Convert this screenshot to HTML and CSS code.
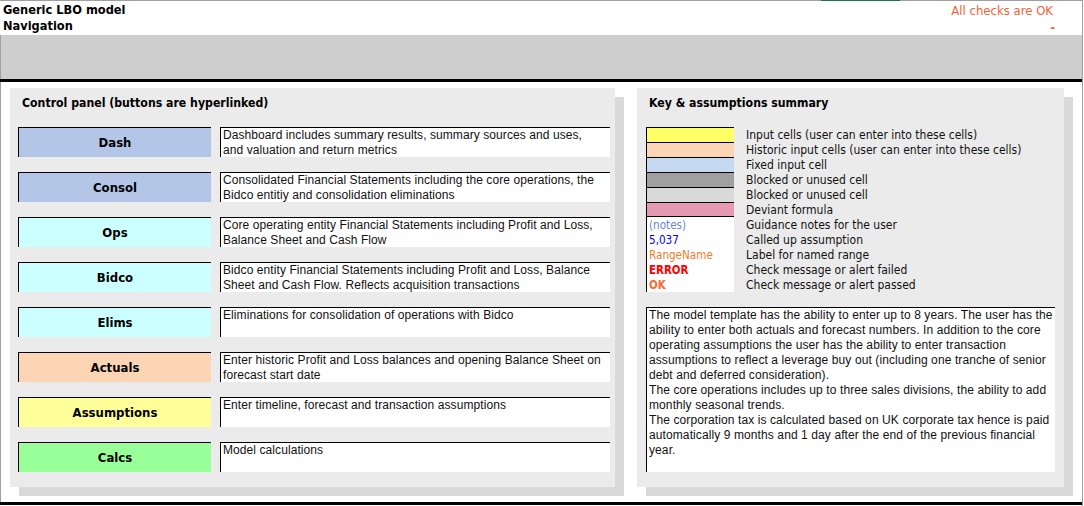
FILE: index.html
```html
<!DOCTYPE html>
<html lang="en">
<head>
    <meta charset="UTF-8">
    <title>Generic LBO model - Navigation</title>
    <link rel="stylesheet" href="styles.css">
</head>
<body>
    <div class="page">
        <div class="header">
            <div class="titles">
                <div class="title">Generic LBO model</div>
                <div class="title">Navigation</div>
            </div>
            <div class="checks">
                <div>All checks are OK</div>
                <div class="dash">-</div>
            </div>
        </div>

        <div class="band"></div>
        <div class="rule"></div>

        <div class="main">
            <div class="panel panel-left">
                <h2>Control panel (buttons are hyperlinked)</h2>

                <div class="rows">
                    <div class="row">
                        <a class="btn btn-blue" href="#dash">Dash</a>
                        <div class="desc">Dashboard includes summary results, summary sources and uses,<br>and valuation and return metrics</div>
                    </div>
                    <div class="row">
                        <a class="btn btn-blue" href="#consol">Consol</a>
                        <div class="desc">Consolidated Financial Statements including the core operations, the<br>Bidco entitiy and consolidation eliminations</div>
                    </div>
                    <div class="row">
                        <a class="btn btn-cyan" href="#ops">Ops</a>
                        <div class="desc">Core operating entity Financial Statements including Profit and Loss,<br>Balance Sheet and Cash Flow</div>
                    </div>
                    <div class="row">
                        <a class="btn btn-cyan" href="#bidco">Bidco</a>
                        <div class="desc">Bidco entity Financial Statements including Profit and Loss, Balance<br>Sheet and Cash Flow. Reflects acquisition transactions</div>
                    </div>
                    <div class="row">
                        <a class="btn btn-cyan" href="#elims">Elims</a>
                        <div class="desc">Eliminations for consolidation of operations with Bidco</div>
                    </div>
                    <div class="row">
                        <a class="btn btn-peach" href="#actuals">Actuals</a>
                        <div class="desc">Enter historic Profit and Loss balances and opening Balance Sheet on<br>forecast start date</div>
                    </div>
                    <div class="row">
                        <a class="btn btn-yellow" href="#assumptions">Assumptions</a>
                        <div class="desc">Enter timeline, forecast and transaction assumptions</div>
                    </div>
                    <div class="row">
                        <a class="btn btn-green" href="#calcs">Calcs</a>
                        <div class="desc">Model calculations</div>
                    </div>
                </div>
            </div>

            <div class="panel panel-right">
                <h2>Key &amp; assumptions summary</h2>

                <div class="legend">
                    <div class="key"><span class="swatch sw-input"></span><span class="label">Input cells (user can enter into these cells)</span></div>
                    <div class="key"><span class="swatch sw-historic"></span><span class="label">Historic input cells (user can enter into these cells)</span></div>
                    <div class="key"><span class="swatch sw-fixed"></span><span class="label">Fixed input cell</span></div>
                    <div class="key"><span class="swatch sw-blocked"></span><span class="label">Blocked or unused cell</span></div>
                    <div class="key"><span class="swatch sw-unused"></span><span class="label">Blocked or unused cell</span></div>
                    <div class="key"><span class="swatch sw-deviant"></span><span class="label">Deviant formula</span></div>
                    <div class="key"><span class="swatch sw-text notes">(notes)</span><span class="label">Guidance notes for the user</span></div>
                    <div class="key"><span class="swatch sw-text called">5,037</span><span class="label">Called up assumption</span></div>
                    <div class="key"><span class="swatch sw-text range">RangeName</span><span class="label">Label for named range</span></div>
                    <div class="key"><span class="swatch sw-text error">ERROR</span><span class="label">Check message or alert failed</span></div>
                    <div class="key"><span class="swatch sw-text ok">OK</span><span class="label">Check message or alert passed</span></div>
                </div>

                <div class="summary">The model template has the ability to enter up to 8 years. The user has the<br>ability to enter both actuals and forecast numbers. In addition to the core<br>operating assumptions the user has the ability to enter transaction<br>assumptions to reflect a leverage buy out (including one tranche of senior<br>debt and deferred consideration).<br>The core operations includes up to three sales divisions, the ability to add<br>monthly seasonal trends.<br>The corporation tax is calculated based on UK corporate tax hence is paid<br>automatically 9 months and 1 day after the end of the previous financial<br>year.</div>
            </div>
        </div>

        <div class="rule"></div>
    </div>
</body>
</html>
```

FILE: styles.css
```css
* {
    margin: 0;
    padding: 0;
    box-sizing: border-box;
}

body {
    font-family: 'Liberation Sans', Arial, sans-serif;
    font-size: 12px;
    color: #111;
    background-color: #fff;
    width: 1084px;
    height: 506px;
    overflow: hidden;
}

.page {
    position: relative;
    width: 1083px;
    height: 506px;
    border-top: 1px solid #a0a0a0;
    border-right: 1px solid #a0a0a0;
}

/* green tab marker on the top edge */
.page::before {
    content: '';
    position: absolute;
    top: -1px;
    left: 821px;
    width: 79px;
    height: 1px;
    background-color: #217346;
}

.header {
    display: flex;
    justify-content: space-between;
    height: 34px;
    padding: 1px 29px 0 3px;
    font-family: 'DejaVu Sans Condensed', 'DejaVu Sans', sans-serif;
}

.title {
    font-weight: bold;
    font-size: 12.7px;
    line-height: 16px;
    color: #000;
}

.checks {
    text-align: right;
    color: #f0643c;
    font-size: 13px;
    line-height: 16px;
    padding-top: 1px;
}

.checks .dash {
    margin-right: -2px;
    line-height: 18px;
    font-weight: bold;
}

.band {
    height: 44px;
    background-color: #cecece;
    border-left: 1px solid #a0a0a0;
}

.rule {
    height: 3px;
    background-color: #000;
}

.main {
    display: flex;
    gap: 22px;
    height: 420px;
    padding: 6px 0 0 9px;
    border-left: 1px solid #a0a0a0;
}

.panel {
    height: 399px;
    background-color: #ebebeb;
    box-shadow: 9px 9px 0 #d9d9d9;
}

.panel h2 {
    font-family: 'DejaVu Sans Condensed', 'DejaVu Sans', sans-serif;
    font-size: 12.2px;
    font-weight: bold;
    line-height: 15px;
    color: #000;
    padding: 8px 0 0 12px;
    margin-bottom: 16px;
}

.panel-left {
    width: 605px;
}

.panel-right {
    width: 427px;
}

.rows {
    display: flex;
    flex-direction: column;
    gap: 15px;
    padding-left: 8px;
}

.row {
    display: flex;
    gap: 9px;
    height: 30px;
}

.btn {
    display: flex;
    align-items: center;
    justify-content: center;
    width: 193px;
    border-top: 1px solid #000;
    border-left: 1px solid #000;
    font-family: 'DejaVu Sans Condensed', 'DejaVu Sans', sans-serif;
    font-size: 13px;
    font-weight: bold;
    color: #000;
    text-decoration: none;
}

.btn-blue { background-color: #b4c6e7; }
.btn-cyan { background-color: #ccffff; }
.btn-peach { background-color: #fcd5b4; }
.btn-yellow { background-color: #ffff99; }
.btn-green { background-color: #99ff99; }

.desc {
    width: 390px;
    background-color: #fff;
    border-top: 1px solid #000;
    border-left: 1px solid #000;
    padding: 0 0 0 2px;
    line-height: 15px;
    letter-spacing: 0.08px;
    white-space: nowrap;
    overflow: hidden;
}

.legend {
    padding-left: 9px;
    font-family: 'DejaVu Sans Condensed', 'DejaVu Sans', sans-serif;
}

.key {
    display: flex;
    height: 15px;
    line-height: 15px;
}

.swatch {
    width: 88px;
    flex: none;
    border-top: 1px solid #000;
    border-left: 1px solid #000;
}

.sw-input { background-color: #ffff66; }
.sw-historic { background-color: #fcd5b4; }
.sw-fixed { background-color: #c5d9f1; }
.sw-blocked { background-color: #a0a0a0; }
.sw-unused { background-color: #d9d9d9; }
.sw-deviant {
    background-color: #e699b2;
    border-bottom: 1px solid #000;
}

.sw-text {
    border-top: none;
    background-color: #fff;
    padding: 1px 0 0 2px;
    font-size: 11.6px;
}

.notes { color: #6b84d6; }
.called { color: #0000ff; }
.range { color: #f07d2a; }
.error { color: #ff0000; font-weight: bold; font-size: 11.4px; }
.ok { color: #ff6633; font-weight: bold; font-size: 11.4px; }

.label {
    padding: 1px 0 0 12px;
    color: #111;
    white-space: nowrap;
}

.summary {
    width: 409px;
    height: 165px;
    margin: 15px 0 0 9px;
    background-color: #fff;
    border-top: 1px solid #000;
    border-left: 1px solid #000;
    padding: 0 0 0 2px;
    line-height: 15px;
    letter-spacing: 0.1px;
    white-space: nowrap;
    overflow: hidden;
}
```
